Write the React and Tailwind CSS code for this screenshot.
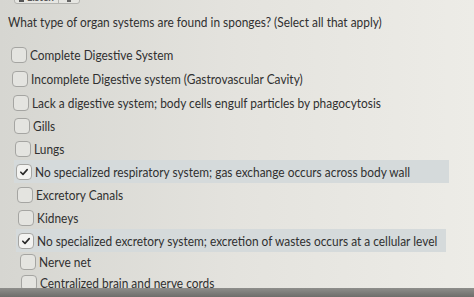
import React from "react";

const rows = [
  { t: "Complete Digestive System", ml: 11, h: 23 },
  { t: "Incomplete Digestive system (Gastrovascular Cavity)", ml: 12, h: 23, mt: 1 },
  { t: "Lack a digestive system; body cells engulf particles by phagocytosis", ml: 13, h: 23, mt: 1 },
  { t: "Gills", ml: 14, h: 23 },
  { t: "Lungs", ml: 15, h: 23 },
  { t: "No specialized respiratory system; gas exchange occurs across body wall", ml: 16, h: 23, checked: true, hl: 449 },
  { t: "Excretory Canals", ml: 17, h: 23 },
  { t: "Kidneys", ml: 18, h: 23 },
  { t: "No specialized excretory system; excretion of wastes occurs at a cellular level", ml: 18, h: 23, checked: true, hl: 446 },
  { t: "Nerve net", ml: 20, h: 20 },
  { t: "Centralized brain and nerve cords", ml: 21, h: 21 },
];

function Box({ checked }) {
  return (
    <div
      className={
        "w-[16px] h-[16px] rounded-[4px] border border-[#a5a5a2] flex items-center justify-center shrink-0 " +
        (checked ? "bg-[#f3f3f1]" : "bg-[#e4e4e0]")
      }
    >
      {checked && (
        <svg width="10" height="10" viewBox="0 0 10 10">
          <path d="M1.8 5.2 L4 7.4 L8.2 2.6" fill="none" stroke="#2a2a2a" strokeWidth="1.6" strokeLinecap="round" strokeLinejoin="round" />
        </svg>
      )}
    </div>
  );
}

export default function App() {
  return (
    <div
      className="relative w-[474px] h-[297px] overflow-hidden bg-linear-to-r from-[#d6d6d1] via-[#e4e3de] to-[#edece7] text-[#303030]"
      style={{ fontFamily: "Lato, 'Open Sans', sans-serif" }}
    >
      <div className="h-[5px] overflow-hidden ml-[14px]">
        <div className="-mt-[14px] flex h-[18px] w-[66px] border border-[#b4b4b0] rounded-b-[3px] bg-[#e6e6e2]">
          <div className="w-[44px] flex items-end justify-center pb-[1px] gap-[3px] border-r border-[#b4b4b0]">
            <span className="w-[5px] h-[5px] bg-[#555]" />
            <span className="text-[10px] font-bold leading-none text-[#555]">Listen</span>
          </div>
          <div className="flex-1 flex items-end justify-center pb-[1px]">
            <span className="w-[4px] h-[4px] bg-[#666]" />
          </div>
        </div>
      </div>
      <div className="ml-[8px] mt-[8px] h-[18px] flex items-center">
        <span className="inline-block origin-left scale-x-[0.85] text-[14px] leading-none whitespace-nowrap">
          What type of organ systems are found in sponges? (Select all that apply)
        </span>
      </div>
      <div className="mt-[12px] flex flex-col">
        {rows.map((r, i) => (
          <div
            key={i}
            className="flex items-center"
            style={{ marginLeft: r.ml, height: r.h, marginTop: r.mt || 0 }}
          >
            <div
              className={"flex items-center h-[23px] " + (r.hl ? "bg-[#d5dadb] -ml-[2px] pl-[2px]" : "")}
              style={r.hl ? { width: r.hl - r.ml + 2 } : undefined}
            >
              <Box checked={r.checked} />
              <span className="ml-[3px] inline-block origin-left scale-x-[0.85] text-[14px] leading-none whitespace-nowrap">{r.t}</span>
            </div>
          </div>
        ))}
      </div>
      <div className="absolute left-0 right-0 bottom-0 h-[9px] bg-linear-to-b from-[#8e8e8b] to-[#6e6e6b]" />
    </div>
  );
}
